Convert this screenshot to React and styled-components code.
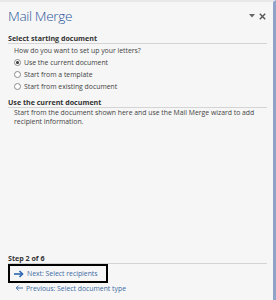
import React from 'react';
import styled, { createGlobalStyle } from 'styled-components';

const GlobalStyle = createGlobalStyle`
  html, body {
    margin: 0;
    padding: 0;
    background: #f6f6f6;
  }
  * {
    box-sizing: border-box;
  }
`;

const Pane = styled.div`
  width: 276px;
  height: 300px;
  display: flex;
  flex-direction: column;
  padding: 0 6px 0 8px;
  background: #f6f6f6;
  border-top: 2px solid #e8e8e8;
  border-right: 3px solid #8fa4c8;
  font-family: 'Segoe UI', 'Open Sans', 'Liberation Sans', sans-serif;
  color: #444;
`;

const TitleBar = styled.div`
  display: flex;
  align-items: center;
  justify-content: space-between;
  height: 22px;
  margin-top: 3px;
`;

const Title = styled.div`
  font-size: 13.6px;
  font-weight: 300;
  letter-spacing: -0.35px;
  color: #2b579a;
  line-height: 22px;
`;

const Controls = styled.div`
  display: flex;
  align-items: center;
  gap: 4px;
  padding-right: 1px;
`;

const Heading = styled.div`
  margin-top: ${p => p.$gap || 0}px;
  font-size: 7.1px;
  font-weight: 700;
  line-height: 9px;
  color: #333;
  border-bottom: 1px solid #d4d4d4;
`;

const Text = styled.div`
  margin-top: ${p => p.$gap || 0}px;
  padding-left: 6px;
  font-size: 6.85px;
  line-height: ${p => p.$lh || 10}px;
  color: #444;
`;

const RadioList = styled.div`
  display: flex;
  flex-direction: column;
`;

const RadioRow = styled.label`
  display: flex;
  align-items: center;
  gap: 3px;
  height: 12px;
  padding-left: 6px;
  font-size: 6.85px;
  color: #444;
`;

const Circle = styled.span`
  width: 7px;
  height: 7px;
  border-radius: 50%;
  border: 1px solid #8a8a8a;
  background: #fff;
  display: flex;
  align-items: center;
  justify-content: center;
  &::after {
    content: '';
    width: 3px;
    height: 3px;
    border-radius: 50%;
    background: ${p => (p.$checked ? '#333' : 'transparent')};
  }
`;

const Footer = styled.div`
  margin-top: auto;
  padding-bottom: 7px;
  display: flex;
  flex-direction: column;
  align-items: flex-start;
`;

const StepHeading = styled(Heading)`
  align-self: stretch;
`;

const LinkRow = styled.div`
  display: flex;
  align-items: center;
  gap: 3px;
  width: ${p => (p.$boxed ? '100px' : 'auto')};
  height: ${p => (p.$boxed ? 19 : 10)}px;
  padding-left: ${p => (p.$boxed ? 4 : 7)}px;
  border: ${p => (p.$boxed ? '2px solid #000' : 'none')};
  font-size: 6.85px;
  color: #3d6ba3;
`;

const Arrow = ({ dir = 'right' }) => (
  <svg width={dir === 'right' ? 10 : 8} height="8" viewBox="0 0 10 8">
    {dir === 'right' ? (
      <g stroke="#2b66b0" strokeWidth="1.6" fill="none">
        <path d="M0 4h8.5" />
        <path d="M5.5 1l3 3-3 3" />
      </g>
    ) : (
      <g stroke="#3b6fb3" strokeWidth="1.2" fill="none">
        <path d="M10 4H1.5" />
        <path d="M4.5 1l-3 3 3 3" />
      </g>
    )}
  </svg>
);

export default function App() {
  return (
    <>
      <GlobalStyle />
      <Pane>
        <TitleBar>
          <Title>Mail Merge</Title>
          <Controls>
            <svg width="6" height="4" viewBox="0 0 6 4">
              <path d="M0 0h6L3 3.5z" fill="#666" />
            </svg>
            <svg width="7" height="7" viewBox="0 0 7 7">
              <path d="M0.8 0.8l5.4 5.4M6.2 0.8L0.8 6.2" stroke="#555" strokeWidth="1.4" />
            </svg>
          </Controls>
        </TitleBar>

        <Heading $gap={7}>Select starting document</Heading>
        <Text $gap={2}>How do you want to set up your letters?</Text>
        <RadioList>
          <RadioRow><Circle $checked />Use the current document</RadioRow>
          <RadioRow><Circle />Start from a template</RadioRow>
          <RadioRow><Circle />Start from existing document</RadioRow>
        </RadioList>

        <Heading $gap={6}>Use the current document</Heading>
        <Text $gap={1} $lh={8.5}>
          Start from the document shown here and use the Mail Merge wizard to add
          recipient information.
        </Text>

        <Footer>
          <StepHeading>Step 2 of 6</StepHeading>
          <LinkRow $boxed>
            <Arrow dir="right" />
            Next: Select recipients
          </LinkRow>
          <LinkRow>
            <Arrow dir="left" />
            Previous: Select document type
          </LinkRow>
        </Footer>
      </Pane>
    </>
  );
}
